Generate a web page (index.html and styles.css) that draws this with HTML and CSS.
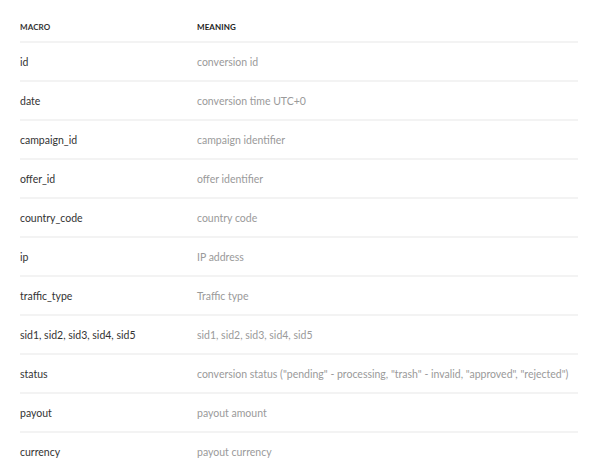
FILE: index.html
```html
<!DOCTYPE html>
<html>
<head>
<meta charset="utf-8">
<link rel="stylesheet" href="styles.css">
</head>
<body>
<div class="table">
  <div class="row head"><div class="c1">MACRO</div><div class="c2">MEANING</div></div>
  <div class="row"><div class="c1">id</div><div class="c2">conversion id</div></div>
  <div class="row"><div class="c1">date</div><div class="c2">conversion time UTC+0</div></div>
  <div class="row"><div class="c1">campaign_id</div><div class="c2">campaign identifier</div></div>
  <div class="row"><div class="c1">offer_id</div><div class="c2">offer identifier</div></div>
  <div class="row"><div class="c1">country_code</div><div class="c2">country code</div></div>
  <div class="row"><div class="c1">ip</div><div class="c2">IP address</div></div>
  <div class="row"><div class="c1">traffic_type</div><div class="c2">Traffic type</div></div>
  <div class="row"><div class="c1">sid1, sid2, sid3, sid4, sid5</div><div class="c2">sid1, sid2, sid3, sid4, sid5</div></div>
  <div class="row"><div class="c1">status</div><div class="c2">conversion status ("pending" - processing, "trash" - invalid, "approved", "rejected")</div></div>
  <div class="row"><div class="c1">payout</div><div class="c2">payout amount</div></div>
  <div class="row last"><div class="c1">currency</div><div class="c2">payout currency</div></div>
</div>
</body>
</html>
```
FILE: styles.css
```css
html, body { margin: 0; background: #fff; }
body { font-family: "Lato", "Liberation Sans", sans-serif; }
.table { width: 558px; padding: 12px 0 0 20px; }
.row {
  display: grid;
  grid-template-columns: 177px 1fr;
  align-items: center;
  height: 37px;
  border-bottom: 2px solid #f3f3f3;
  font-size: 10.5px;
}
.row.head { height: 29px; font-size: 8px; font-weight: 700; color: #222; letter-spacing: 0.1px; }
.row.last { border-bottom: none; }
.c1 { color: #333; }
.c2 { color: #9a9a9a; white-space: nowrap; }
.head .c2 { color: #222; }
```
